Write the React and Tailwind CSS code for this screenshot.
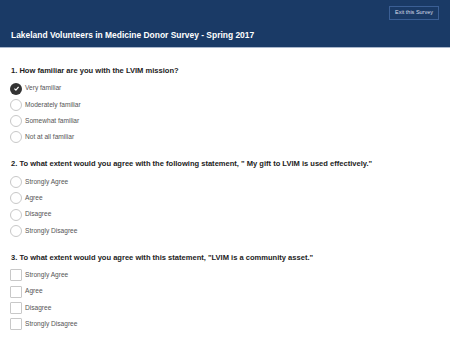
import React from "react";

const questions = [
  {
    title: "1. How familiar are you with the LVIM mission?",
    type: "radio",
    options: ["Very familiar", "Moderately familiar", "Somewhat familiar", "Not at all familiar"],
    checked: 0,
  },
  {
    title: '2. To what extent would you agree with the following statement, " My gift to LVIM is used effectively."',
    type: "radio",
    options: ["Strongly Agree", "Agree", "Disagree", "Strongly Disagree"],
  },
  {
    title: '3. To what extent would you agree with this statement, "LVIM is a community asset."',
    type: "checkbox",
    options: ["Strongly Agree", "Agree", "Disagree", "Strongly Disagree"],
  },
];

function Radio({ checked }) {
  if (checked) {
    return (
      <span className="w-[12px] h-[12px] rounded-full bg-[#333] flex items-center justify-center">
        <svg width="7" height="7" viewBox="0 0 10 10">
          <path d="M2 5.2 L4.2 7.3 L8 2.8" fill="none" stroke="white" strokeWidth="1.8" />
        </svg>
      </span>
    );
  }
  return <span className="w-[12px] h-[12px] rounded-full border border-[#c8c8c8] bg-white" />;
}

function Checkbox() {
  return <span className="w-[12px] h-[12px] rounded-[1px] border border-[#c8c8c8] bg-white" />;
}

export default function App() {
  return (
    <div className="w-[450px] h-[340px] bg-white overflow-hidden font-['Liberation_Sans',Arial,sans-serif]">
      <header className="h-[48px] bg-[#1a3a66] border-b border-[#aab7cc] flex flex-col px-[11px]">
        <div className="flex justify-end pt-[6px] pr-[0px]">
          <button className="h-[14px] px-[5px] border border-[#3b5f95] text-[5.5px] text-[#d6deea] leading-none">
            Exit this Survey
          </button>
        </div>
        <h1 className="mt-[11px] text-white font-bold text-[8.45px] leading-none">
          Lakeland Volunteers in Medicine Donor Survey - Spring 2017
        </h1>
      </header>

      <main className="px-[10px] pt-[19px]">
        {questions.map((q, i) => (
          <section key={i} className="mb-[17px]">
            <h2 className="text-[7.55px] font-bold text-[#222] leading-none pl-[1px] mb-[8px]">{q.title}</h2>
            <div className="flex flex-col gap-[4.3px]">
              {q.options.map((o, j) => (
                <label key={j} className="flex items-center gap-[3px] h-[12px]">
                  {q.type === "radio" ? <Radio checked={q.checked === j} /> : <Checkbox />}
                  <span className="text-[6.6px] text-[#555] leading-none">{o}</span>
                </label>
              ))}
            </div>
          </section>
        ))}
      </main>
    </div>
  );
}
